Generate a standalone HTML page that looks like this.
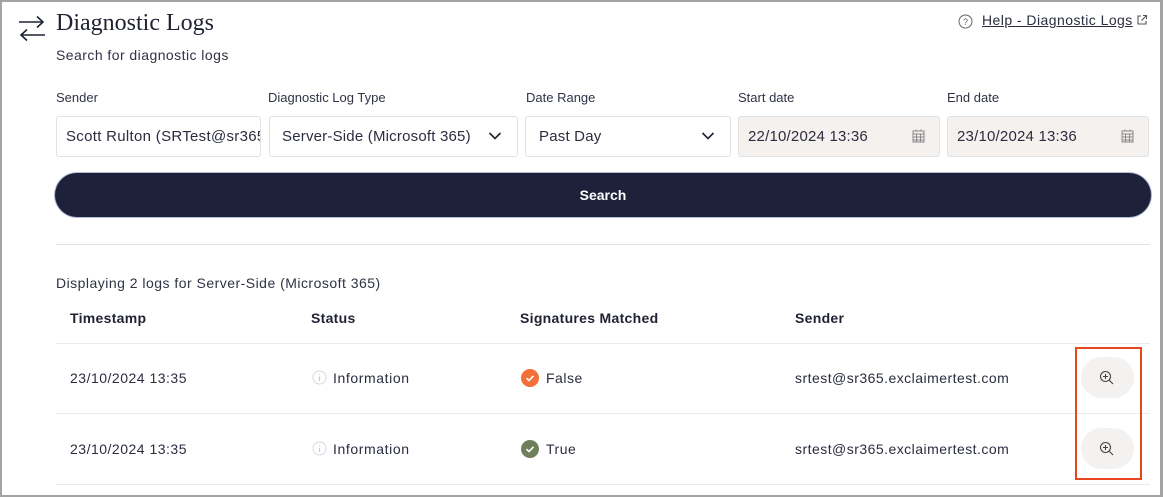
<!DOCTYPE html>
<html><head><meta charset="utf-8"><style>
*{margin:0;padding:0;box-sizing:border-box}
body{width:1163px;height:497px;background:#fff;font-family:"Liberation Sans",sans-serif;color:#2a2d3e;position:relative;overflow:hidden}
.frame{position:absolute;left:0;top:0;width:1163px;height:497px;border:2px solid #a3a3a3;border-right-width:3px;border-bottom-width:2px}
.a{position:absolute;white-space:nowrap}
.lbl{font-size:13px;color:#2f3344}
.box{position:absolute;top:116px;height:41px;border:1px solid #e2e2e2;border-radius:3px;font-size:15px;line-height:39px;padding-left:9px;color:#2a2d3e;overflow:hidden;white-space:nowrap;letter-spacing:0.2px}
.dis{background:#f4f1ef}
.hr{position:absolute;left:56px;width:1094px;height:1px;background:#ebebeb}
.th{font-size:14px;font-weight:bold;color:#1f2233;top:310px;letter-spacing:0.3px}
.td{font-size:14px;color:#2a2d3e;letter-spacing:0.5px}
.zb{position:absolute;left:1081px;width:53px;height:41px;border-radius:21px;background:#f4f2f0}
</style></head><body>
<div class="frame"></div>
<svg class="a" style="left:17px;top:14px" width="30" height="28" viewBox="0 0 30 28" fill="none" stroke="#1f2233" stroke-width="1.6"><path d="M2 8H26M20 2.5L26 8L20 13.5"/><path d="M28 21H4M10 15.5L4 21L10 26.5"/></svg>
<div class="a" style="left:56px;top:10px;font-family:'Liberation Serif',serif;font-size:24px;color:#1f2233">Diagnostic Logs</div>
<div class="a" style="left:56px;top:47px;font-size:14px;color:#2f3344;letter-spacing:0.45px">Search for diagnostic logs</div>
<svg class="a" style="left:958px;top:14px" width="15" height="15" viewBox="0 0 15 15"><circle cx="7.5" cy="7.5" r="6.5" fill="none" stroke="#666" stroke-width="1"/><text x="7.5" y="11" font-size="9" text-anchor="middle" fill="#666" font-family="Liberation Sans">?</text></svg>
<div class="a" style="left:982px;top:12px;font-size:14px;color:#2a2d3e;text-decoration:underline;letter-spacing:0.45px">Help - Diagnostic Logs</div>
<svg class="a" style="left:1136px;top:14px" width="12" height="12" viewBox="0 0 12 12" fill="none" stroke="#555" stroke-width="1.1"><path d="M5 2H2V10H10V7M7 1.5H10.5V5M10.5 1.5L5.5 6.5"/></svg>

<div class="a lbl" style="left:56px;top:90px">Sender</div>
<div class="a lbl" style="left:268px;top:90px">Diagnostic Log Type</div>
<div class="a lbl" style="left:526px;top:90px">Date Range</div>
<div class="a lbl" style="left:738px;top:90px">Start date</div>
<div class="a lbl" style="left:947px;top:90px">End date</div>

<div class="box" style="left:56px;width:205px;letter-spacing:0.3px">Scott Rulton (SRTest@sr365.excl</div>
<div class="box" style="left:269px;width:249px;padding-left:12px">Server-Side (Microsoft 365)</div>
<div class="box" style="left:525px;width:206px;padding-left:13px">Past Day</div>
<svg class="a" style="left:488px;top:131px" width="14" height="10" viewBox="0 0 14 10" fill="none" stroke="#1f2233" stroke-width="1.6"><path d="M1.5 2L7 7.5L12.5 2"/></svg>
<svg class="a" style="left:701px;top:131px" width="14" height="10" viewBox="0 0 14 10" fill="none" stroke="#1f2233" stroke-width="1.6"><path d="M1.5 2L7 7.5L12.5 2"/></svg>
<div class="box dis" style="left:738px;width:202px">22/10/2024 13:36</div>
<div class="box dis" style="left:947px;width:202px">23/10/2024 13:36</div>
<svg class="a" style="left:912px;top:129px" width="13" height="14" viewBox="0 0 13 14" fill="none" stroke="#888" stroke-width="1"><rect x="1" y="2" width="11" height="11"/><path d="M1 5H12M1 8H12M1 11H12M4.5 5V13M8.5 5V13M4 0.5V2.5M9 0.5V2.5"/></svg>
<svg class="a" style="left:1121px;top:129px" width="13" height="14" viewBox="0 0 13 14" fill="none" stroke="#888" stroke-width="1"><rect x="1" y="2" width="11" height="11"/><path d="M1 5H12M1 8H12M1 11H12M4.5 5V13M8.5 5V13M4 0.5V2.5M9 0.5V2.5"/></svg>

<div class="a" style="left:55px;top:173px;width:1096px;height:44px;border-radius:22px;background:#1d2139;box-shadow:0 0 0 1px #b4bdd6;color:#fff;font-weight:bold;font-size:14px;text-align:center;line-height:44px">Search</div>
<div class="hr" style="top:244px;background:#e4e0dc"></div>

<div class="a" style="left:56px;top:275px;font-size:14px;color:#2f3344;letter-spacing:0.48px">Displaying 2 logs for Server-Side (Microsoft 365)</div>
<div class="a th" style="left:70px">Timestamp</div>
<div class="a th" style="left:311px">Status</div>
<div class="a th" style="left:520px">Signatures Matched</div>
<div class="a th" style="left:795px">Sender</div>
<div class="hr" style="top:343px"></div>
<div class="hr" style="top:413px"></div>
<div class="hr" style="top:484px"></div>

<div class="a td" style="left:70px;top:370px">23/10/2024 13:35</div>
<div class="a td" style="left:70px;top:441px">23/10/2024 13:35</div>
<svg class="a" style="left:312px;top:370px" width="15" height="15" viewBox="0 0 15 15"><circle cx="7.5" cy="7.5" r="6.5" fill="none" stroke="#d8d8e0"/><path d="M7.5 6.5V11M7.5 4V4.8" stroke="#c8c8d4" stroke-width="1.2"/></svg>
<svg class="a" style="left:312px;top:441px" width="15" height="15" viewBox="0 0 15 15"><circle cx="7.5" cy="7.5" r="6.5" fill="none" stroke="#d8d8e0"/><path d="M7.5 6.5V11M7.5 4V4.8" stroke="#c8c8d4" stroke-width="1.2"/></svg>
<div class="a td" style="left:333px;top:370px;letter-spacing:0.6px">Information</div>
<div class="a td" style="left:333px;top:441px;letter-spacing:0.6px">Information</div>
<svg class="a" style="left:521px;top:369px" width="18" height="18" viewBox="0 0 18 18"><circle cx="9" cy="9" r="9" fill="#f36f3a"/><path d="M5.5 9.2L8 11.5L12.5 6.8" fill="none" stroke="#fff" stroke-width="1.6"/></svg>
<svg class="a" style="left:521px;top:440px" width="18" height="18" viewBox="0 0 18 18"><circle cx="9" cy="9" r="9" fill="#6f7f5b"/><path d="M5.5 9.2L8 11.5L12.5 6.8" fill="none" stroke="#fff" stroke-width="1.6"/></svg>
<div class="a td" style="left:546px;top:370px">False</div>
<div class="a td" style="left:546px;top:441px">True</div>
<div class="a td" style="left:795px;top:370px;letter-spacing:0.47px">srtest@sr365.exclaimertest.com</div>
<div class="a td" style="left:795px;top:441px;letter-spacing:0.47px">srtest@sr365.exclaimertest.com</div>

<div class="zb" style="top:357px"></div>
<div class="zb" style="top:428px"></div>
<svg class="a" style="left:1099px;top:370px" width="16" height="16" viewBox="0 0 16 16" fill="none" stroke="#444" stroke-width="1.1"><circle cx="6.5" cy="6.5" r="5"/><path d="M6.5 4V9M4 6.5H9M10 10L14 14"/></svg>
<svg class="a" style="left:1099px;top:441px" width="16" height="16" viewBox="0 0 16 16" fill="none" stroke="#444" stroke-width="1.1"><circle cx="6.5" cy="6.5" r="5"/><path d="M6.5 4V9M4 6.5H9M10 10L14 14"/></svg>
<div class="a" style="left:1075px;top:347px;width:67px;height:133px;border:2.5px solid #e8461c"></div>
</body></html>
